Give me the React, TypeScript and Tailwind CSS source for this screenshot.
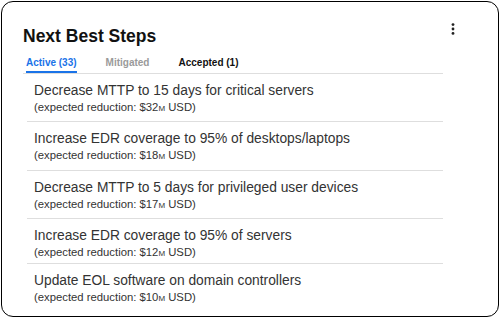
const steps = [
  { title: 'Decrease MTTP to 15 days for critical servers', amount: '$32', h: 'h-[48px]' },
  { title: 'Increase EDR coverage to 95% of desktops/laptops', amount: '$18', h: 'h-[49px]' },
  { title: 'Decrease MTTP to 5 days for privileged user devices', amount: '$17', h: 'h-[48px]' },
  { title: 'Increase EDR coverage to 95% of servers', amount: '$12', h: 'h-[45px]' },
  { title: 'Update EOL software on domain controllers', amount: '$10', h: 'h-[44px]' },
];

const tabs = [
  { label: 'Active (33)', state: 'active' },
  { label: 'Mitigated', state: 'muted' },
  { label: 'Accepted (1)', state: 'normal' },
];

const App = () => {
  return (
    <div className="h-[319px] w-[500px] bg-white p-px font-['Liberation_Sans',Arial,sans-serif]">
      <div className="flex h-[316px] flex-col rounded-[12px] border-[1.5px] border-black bg-white pl-[21px] pr-[55px] pt-[22px]">
        {/* Header */}
        <div className="flex items-start justify-between">
          <h1 className="text-[17.5px] font-bold leading-[24px] text-[#111]">Next Best Steps</h1>
          <svg width="4" height="12" viewBox="0 0 4 12" className="mr-[-12px] mt-[-1px]">
            <circle cx="2" cy="1.6" r="1.4" fill="#222" />
            <circle cx="2" cy="6" r="1.4" fill="#222" />
            <circle cx="2" cy="10.4" r="1.4" fill="#222" />
          </svg>
        </div>

        {/* Tabs */}
        <div className="mt-[8px] flex gap-[29px] border-b border-[#dedede] pl-[3px]">
          {tabs.map((tab) => (
            <span
              key={tab.label}
              className={
                tab.state === 'active'
                  ? 'border-b-2 border-[#1a73e8] pb-[2px] text-[10px] font-bold leading-[13px] text-[#1a73e8]'
                  : tab.state === 'muted'
                    ? 'pb-[4px] text-[10px] font-bold leading-[13px] text-[#9a9a9a]'
                    : 'pb-[4px] text-[10px] font-bold leading-[13px] text-[#111]'
              }
            >
              {tab.label}
            </span>
          ))}
        </div>

        {/* Steps */}
        <div className="flex flex-col pl-[4px]">
          {steps.map((step, i) => (
            <div
              key={step.title}
              className={`${step.h} flex flex-col pl-[7px] pt-[8px] ${i < steps.length - 1 ? 'border-b border-[#dedede]' : ''}`}
            >
              <span className="text-[13.8px] leading-[17px] text-[#333]">{step.title}</span>
              <span className="text-[11.3px] leading-[16px] text-[#333]">
                (expected reduction: {step.amount}
                <span className="text-[8px]">M</span> USD)
              </span>
            </div>
          ))}
        </div>
      </div>
    </div>
  );
};

export default App;
